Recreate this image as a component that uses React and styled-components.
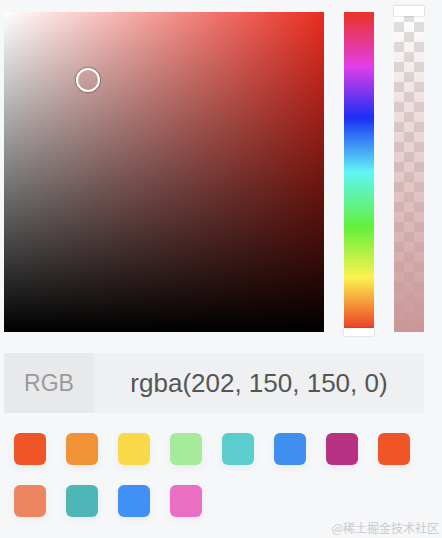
import React from "react";
import styled, { createGlobalStyle } from "styled-components";

const Global = createGlobalStyle`
  html, body { margin: 0; padding: 0; background: #f6f7f9; }
  body { font-family: "Helvetica Neue", "Liberation Sans", Arial, sans-serif; }
`;

const Page = styled.div`
  position: relative;
  width: 442px;
  height: 538px;
  padding: 12px 0 0 4px;
  box-sizing: border-box;
  background: #f6f7f9;
  overflow: hidden;
`;

const PickerRow = styled.div`
  display: flex;
  gap: 20px;
  height: 320px;
`;

const Saturation = styled.div`
  position: relative;
  width: 320px;
  height: 320px;
  background:
    linear-gradient(to top, #000, rgba(0, 0, 0, 0)),
    linear-gradient(to right, #fff, rgba(255, 255, 255, 0)),
    rgb(234, 44, 32);
`;

const Pointer = styled.div`
  position: absolute;
  left: ${(p) => p.x}px;
  top: ${(p) => p.y}px;
  width: 20px;
  height: 20px;
  margin: -12px 0 0 -12px;
  border: 2px solid #fff;
  border-radius: 50%;
  box-shadow: 0 0 1px 1px rgba(0, 0, 0, 0.3);
`;

const Bar = styled.div`
  position: relative;
  width: 30px;
  height: 320px;
`;

const HueBar = styled(Bar)`
  background: linear-gradient(
    to bottom,
    #ea3323 0%,
    #e33ee8 17%,
    #1b2ff5 33%,
    #5ff5f5 50%,
    #62f03c 67%,
    #fdf24f 83%,
    #ea3323 100%
  );
`;

const AlphaBar = styled(Bar)`
  background-color: #fff;
  background-image:
    linear-gradient(to bottom, rgba(202, 150, 150, 0), rgb(202, 150, 150)),
    linear-gradient(45deg, #e0e0e0 25%, transparent 25%, transparent 75%, #e0e0e0 75%),
    linear-gradient(45deg, #e0e0e0 25%, transparent 25%, transparent 75%, #e0e0e0 75%);
  background-size: 100% 100%, 20px 20px, 20px 20px;
  background-position: 0 0, 0 0, 10px 10px;
`;

const Handle = styled.div`
  position: absolute;
  left: 0;
  right: 0;
  top: ${(p) => p.top}px;
  height: ${(p) => p.h}px;
  background: #fff;
  box-shadow: 0 0 2px rgba(0, 0, 0, 0.25);
`;

const InputRow = styled.div`
  display: flex;
  width: 420px;
  height: 60px;
  margin-top: 21px;
  background: #eef0f2;
`;

const Label = styled.div`
  width: 90px;
  display: flex;
  align-items: center;
  justify-content: center;
  background: #e8e9eb;
  color: #9a9a9a;
  font-size: 23px;
`;

const Value = styled.div`
  flex: 1;
  display: flex;
  align-items: center;
  justify-content: center;
  color: #555;
  font-size: 26px;
`;

const Swatches = styled.div`
  display: grid;
  grid-template-columns: repeat(8, 32px);
  column-gap: 20px;
  row-gap: 20px;
  margin-top: 20px;
  padding-left: 10px;
`;

const Swatch = styled.div`
  width: 32px;
  height: 32px;
  border-radius: 6px;
  background: ${(p) => p.color};
  box-shadow: 0 3px 8px rgba(0, 0, 0, 0.05);
`;

const Watermark = styled.div`
  position: absolute;
  right: 3px;
  bottom: 2px;
  font-family: "Noto Sans CJK SC", sans-serif;
  font-size: 12px;
  color: #c9cbcf;
`;

const colors = [
  "#ef5527",
  "#f09235",
  "#f9d949",
  "#a6eb9a",
  "#5bcdcd",
  "#418ef1",
  "#b83284",
  "#ef5527",
  "#ee8561",
  "#4fb6b7",
  "#4090f5",
  "#ea6fc3",
];

export default function App() {
  return (
    <Page>
      <Global />
      <PickerRow>
        <Saturation>
          <Pointer x={84} y={68} />
        </Saturation>
        <HueBar>
          <Handle top={316} h={8} />
        </HueBar>
        <AlphaBar>
          <Handle top={-6} h={10} />
        </AlphaBar>
      </PickerRow>
      <InputRow>
        <Label>RGB</Label>
        <Value>rgba(202, 150, 150, 0)</Value>
      </InputRow>
      <Swatches>
        {colors.map((c, i) => (
          <Swatch key={i} color={c} />
        ))}
      </Swatches>
      <Watermark>@稀土掘金技术社区</Watermark>
    </Page>
  );
}
